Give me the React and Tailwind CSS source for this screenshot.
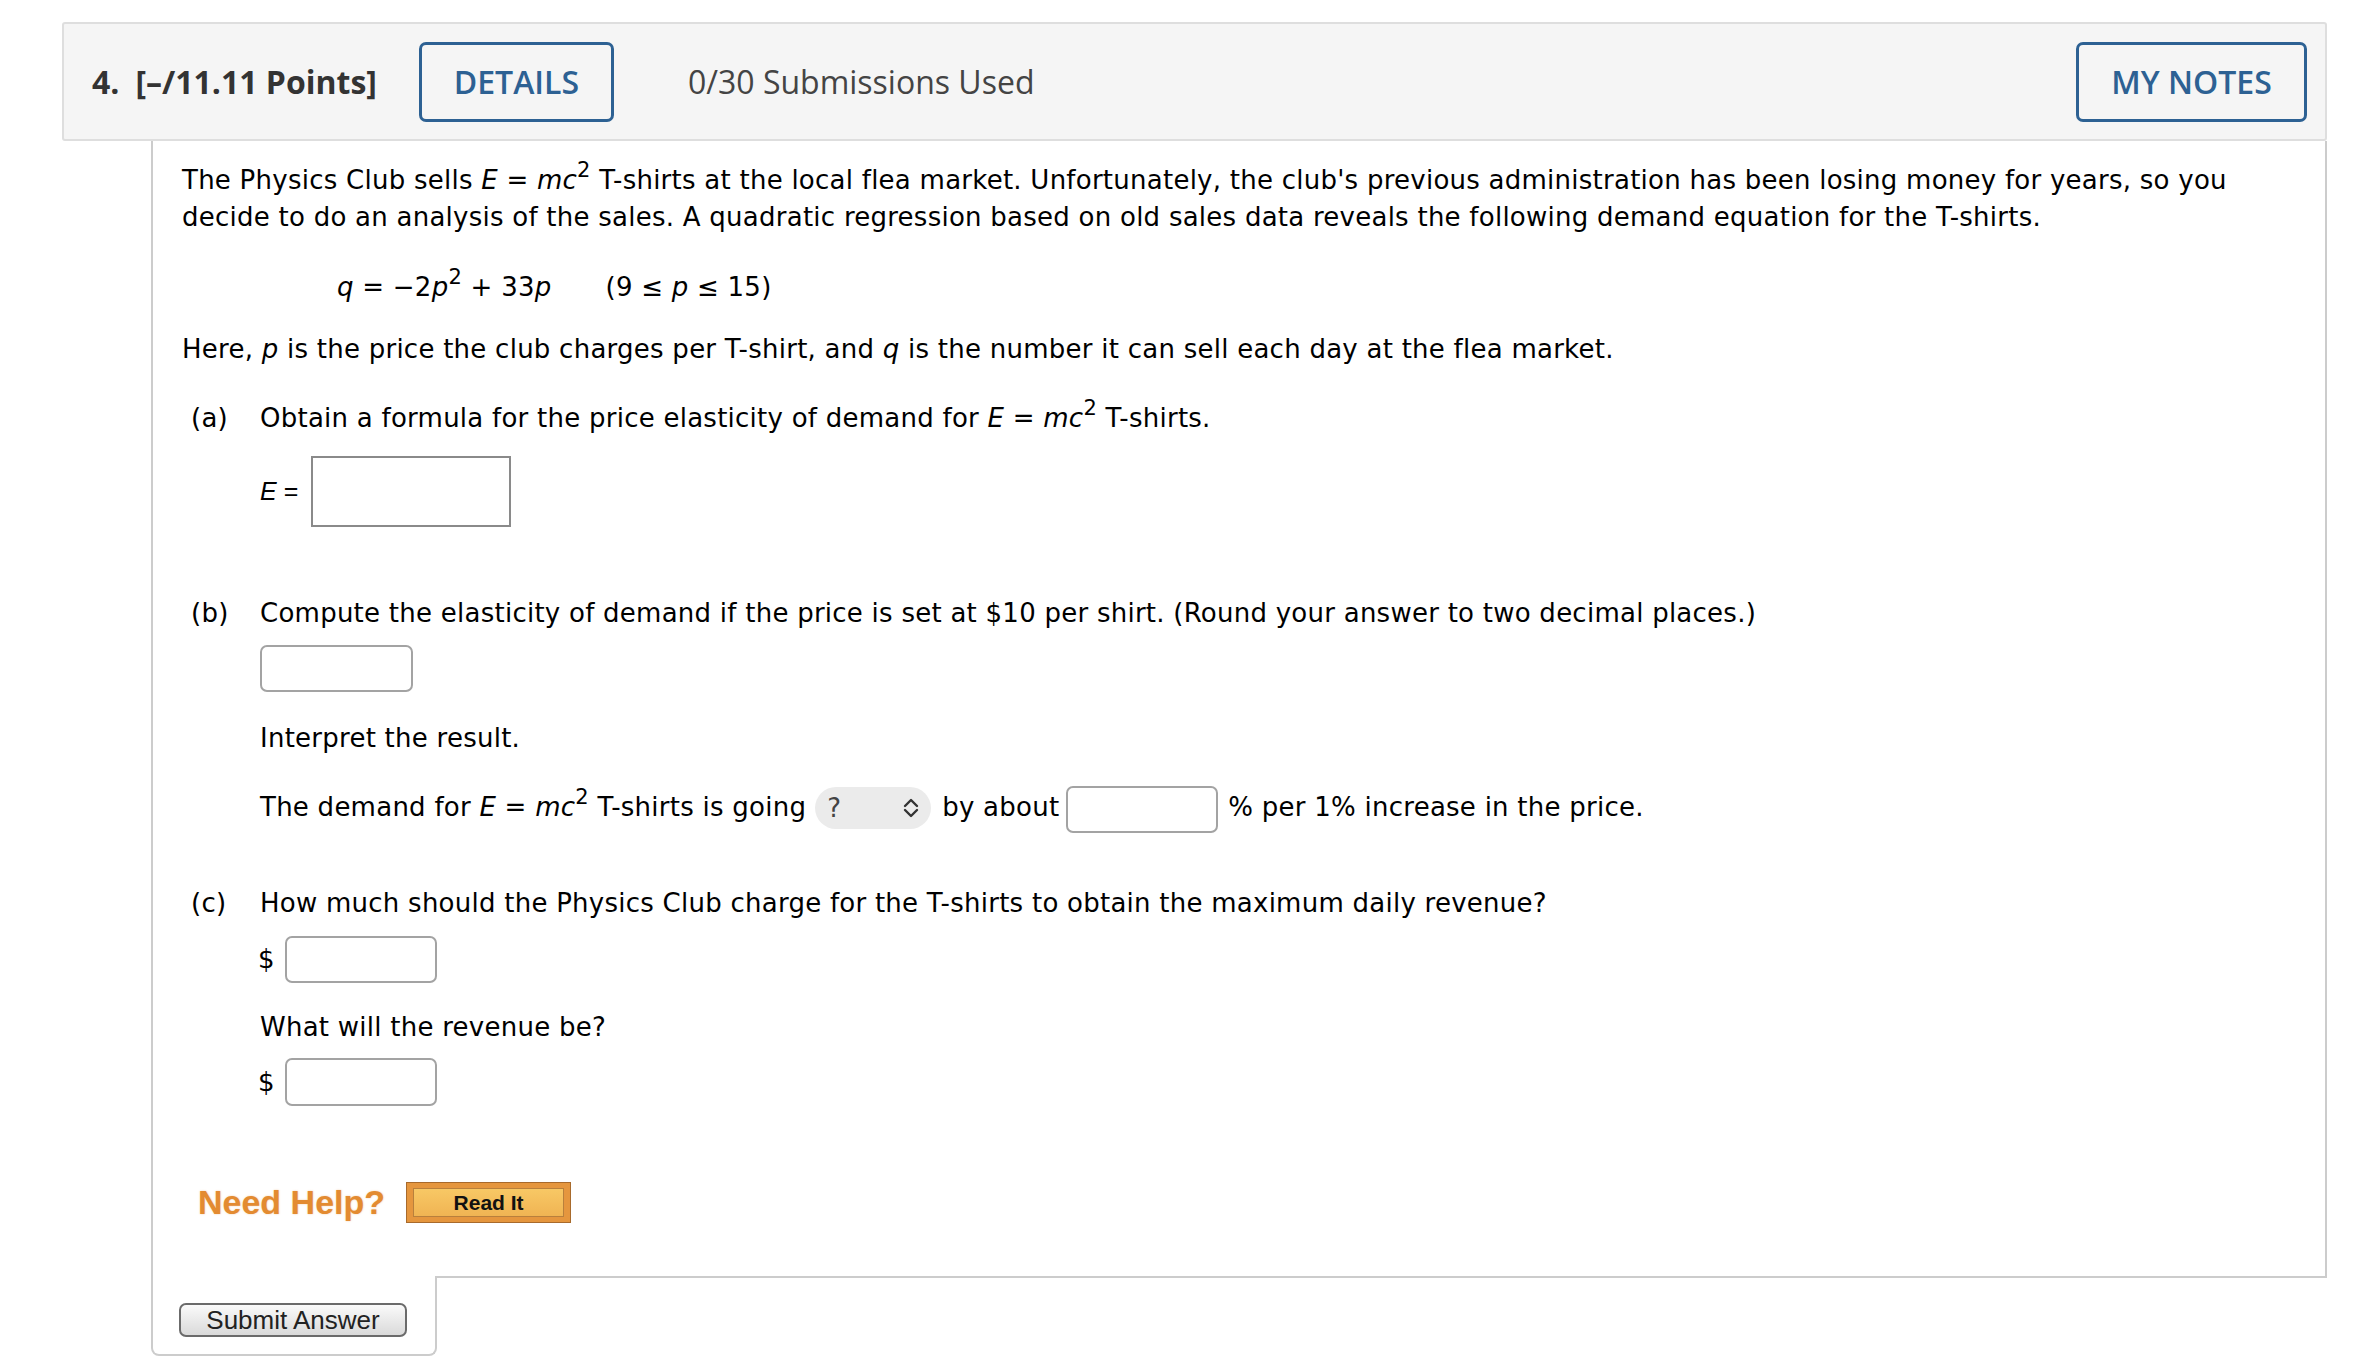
import React from 'react';

const UpDown = () => (
  <svg width="18" height="20" viewBox="0 0 18 20" fill="none" stroke="#333" strokeWidth="2.4" strokeLinecap="round" strokeLinejoin="round">
    <path d="M3 8l6-6 6 6" />
    <path d="M3 12l6 6 6-6" />
  </svg>
);

const Emc2 = () => (
  <>
    <i>E</i> = <i>mc</i>
    <sup className="text-[21px] -top-[0.55em]">2</sup>
  </>
);

const Box = ({ className = '' }) => (
  <span className={`block shrink-0 bg-white border-2 border-[#a3a3a3] rounded-[7px] ${className}`} />
);

const Part = ({ label, children }) => (
  <div className="flex pl-[9px]">
    <span className="w-[69px] shrink-0">{label}</span>
    <div className="flex-1">{children}</div>
  </div>
);

const App = () => {
  return (
    <div className="min-h-screen bg-white pt-[22px] pl-[62px] pr-[33px] pb-[8px]">
      {/* question header */}
      <div className="h-[119px] flex items-center bg-[#f5f5f5] border-2 border-[#dedede] rounded-[3px] pl-[28px] pr-[18px] font-['Open_Sans',sans-serif]">
        <span className="text-[32px] font-bold text-[#333]">4.</span>
        <span className="ml-[16px] text-[32px] font-bold text-[#333]">[–/11.11 Points]</span>
        <button className="ml-[42px] w-[195px] h-[80px] border-[3px] border-[#2d6193] rounded-[7px] text-[32px] font-semibold text-[#2d6193]">
          DETAILS
        </button>
        <span className="ml-[74px] text-[32px] text-[#444]">0/30 Submissions Used</span>
        <button className="ml-auto w-[231px] h-[80px] border-[3px] border-[#2d6193] rounded-[7px] text-[32px] font-semibold text-[#2d6193]">
          MY NOTES
        </button>
      </div>

      <div className="ml-[89px] font-['DejaVu_Sans',Verdana,sans-serif] text-[26px] leading-[37px] tracking-[0.25px] text-black">
        {/* question body */}
        <div className="border-x-2 border-[#cccccc] pl-[29px] pr-[30px] pt-[21px] pb-[53px]">
          <p>
            The Physics Club sells <Emc2 /> T-shirts at the local flea market. Unfortunately, the club's previous
            administration has been losing money for years, so you decide to do an analysis of the sales. A quadratic
            regression based on old sales data reveals the following demand equation for the T-shirts.
          </p>

          <p className="mt-[33px] pl-[155px]">
            <i>q</i> = −2<i>p</i>
            <sup className="text-[21px] -top-[0.55em]">2</sup> + 33<i>p</i>
            <span className="ml-[54px]">
              (9 ≤ <i>p</i> ≤ 15)
            </span>
          </p>

          <p className="mt-[25px]">
            Here, <i>p</i> is the price the club charges per T-shirt, and <i>q</i> is the number it can sell each day
            at the flea market.
          </p>

          <div className="mt-[32px]">
            <Part label="(a)">
              <p>
                Obtain a formula for the price elasticity of demand for <Emc2 /> T-shirts.
              </p>
              <div className="mt-[19px] flex items-center">
                <span className="font-['Liberation_Sans',Arial,sans-serif] text-[25px] tracking-normal">
                  <i>E</i> =
                </span>
                <span className="ml-[13px] block w-[200px] h-[71px] border-2 border-[#8a8a8a] bg-white" />
              </div>
            </Part>
          </div>

          <div className="mt-[68px]">
            <Part label="(b)">
              <p>Compute the elasticity of demand if the price is set at $10 per shirt. (Round your answer to two decimal places.)</p>
              <Box className="mt-[13px] w-[153px] h-[47px]" />
              <p className="mt-[28px]">Interpret the result.</p>
              <div className="mt-[28px] flex items-start">
                <span className="pt-[4px]">
                  The demand for <Emc2 /> T-shirts is going
                </span>
                <span className="ml-[9px] mt-[2px] w-[116px] h-[42px] rounded-full bg-[#ebebeb] flex items-center pl-[12px] pr-[11px] text-[#444] leading-none">
                  <span>?</span>
                  <span className="ml-auto flex">
                    <UpDown />
                  </span>
                </span>
                <span className="ml-[11px] pt-[4px]">by about</span>
                <Box className="ml-[7px] mt-[1px] w-[152px] h-[47px]" />
                <span className="ml-[10px] pt-[4px]">% per 1% increase in the price.</span>
              </div>
            </Part>
          </div>

          <div className="mt-[52px]">
            <Part label="(c)">
              <p>How much should the Physics Club charge for the T-shirts to obtain the maximum daily revenue?</p>
              <div className="mt-[14px] flex items-center">
                <span className="-ml-[2px]">$</span>
                <Box className="ml-[10px] w-[152px] h-[47px]" />
              </div>
              <p className="mt-[26px]">What will the revenue be?</p>
              <div className="mt-[12px] flex items-center">
                <span className="-ml-[2px]">$</span>
                <Box className="ml-[10px] w-[152px] h-[48px]" />
              </div>
            </Part>
          </div>

          {/* help */}
          <div className="mt-[76px] ml-[16px] flex items-center font-['Liberation_Sans',Arial,sans-serif] tracking-normal">
            <span className="text-[34px] font-bold text-[#e38b31] [text-shadow:0_0_2px_rgba(227,139,49,0.45)]">
              Need Help?
            </span>
            <span className="ml-[21px] w-[165px] h-[41px] flex items-center justify-center bg-[#e5963e] border border-[#a86a2c] px-[6px] py-[5px]">
              <span className="w-full h-full flex items-center justify-center border border-[#b9803c] bg-gradient-to-b from-[#f8c865] to-[#f0b453] text-[21px] leading-none font-bold text-[#111]">
                Read It
              </span>
            </span>
          </div>
        </div>

        {/* submit tab */}
        <div className="flex">
          <div className="w-[286px] h-[80px] border-x-2 border-b-2 border-[#cccccc] rounded-b-[8px] pl-[26px] pt-[26px]">
            <button className="w-[228px] h-[34px] rounded-[7px] border-2 border-[#6b6b6b] bg-gradient-to-b from-[#fafafa] to-[#dadada] font-['Liberation_Sans',Arial,sans-serif] text-[26px] leading-none tracking-normal text-[#222]">
              Submit Answer
            </button>
          </div>
          <div className="flex-1 border-t-2 border-[#cccccc]" />
        </div>
      </div>
    </div>
  );
};

export default App;
